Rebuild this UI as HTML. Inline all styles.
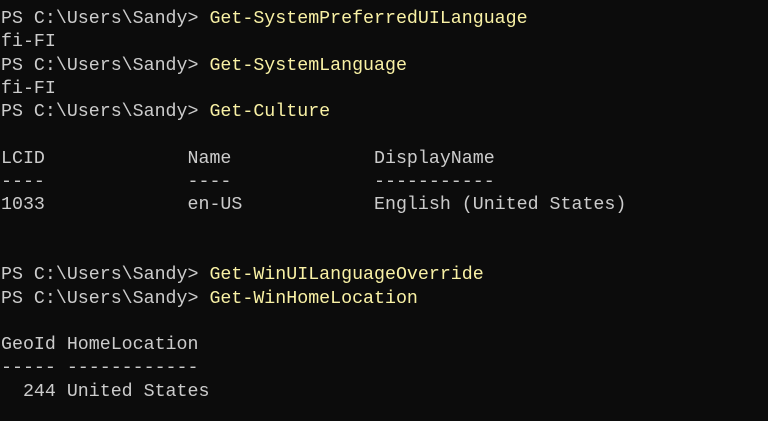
<!DOCTYPE html><html><head><style>
body{margin:0;background:#0c0c0c;width:768px;height:421px;overflow:hidden}
pre{margin:0;position:absolute;left:1px;top:8px;font-family:"Liberation Mono",monospace;font-size:18.3px;line-height:23.3px;color:#cccccc}
.y{color:#f9f1a5}
</style></head><body><pre>PS C:\Users\Sandy&gt; <span class="y">Get-SystemPreferredUILanguage</span>
fi-FI
PS C:\Users\Sandy&gt; <span class="y">Get-SystemLanguage</span>
fi-FI
PS C:\Users\Sandy&gt; <span class="y">Get-Culture</span>

LCID             Name             DisplayName
----             ----             -----------
1033             en-US            English (United States)


PS C:\Users\Sandy&gt; <span class="y">Get-WinUILanguageOverride</span>
PS C:\Users\Sandy&gt; <span class="y">Get-WinHomeLocation</span>

GeoId HomeLocation
----- ------------
  244 United States
</pre></body></html>
